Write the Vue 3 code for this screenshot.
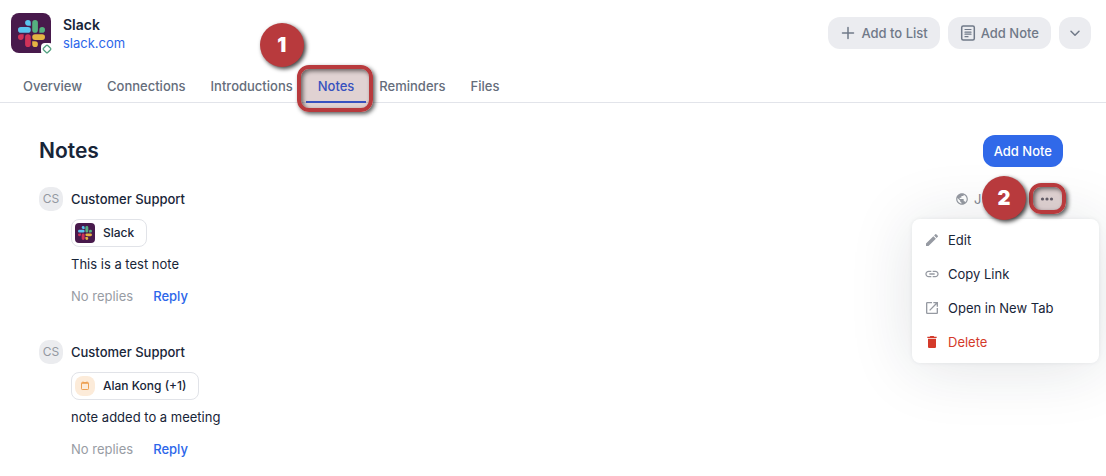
<script setup>
import { ref } from 'vue'

const tabs = ['Overview', 'Connections', 'Introductions', 'Notes', 'Reminders', 'Files']
const activeTab = ref('Notes')

const notes = [
  { id: 1, author: 'Customer Support', initials: 'CS', tag: 'Slack', kind: 'company', body: 'This is a test note', date: 'J', menuOpen: true },
  { id: 2, author: 'Customer Support', initials: 'CS', tag: 'Alan Kong (+1)', kind: 'meeting', body: 'note added to a meeting', date: '', menuOpen: false },
]

const menuItems = [
  { label: 'Edit', icon: 'M3 17.250V21h3.750L17.810 9.940l-3.750-3.750L3 17.250zM20.710 7.040a1 1 0 0 0 0-1.410l-2.340-2.340a1 1 0 0 0-1.410 0l-1.830 1.830 3.750 3.750 1.830-1.830z' },
  { label: 'Copy Link', icon: 'M3.900 12c0-1.710 1.390-3.100 3.100-3.100h4V7H7c-2.760 0-5 2.240-5 5s2.240 5 5 5h4v-1.900H7c-1.710 0-3.100-1.390-3.100-3.100zM8 13h8v-2H8v2zm9-6h-4v1.900h4c1.710 0 3.100 1.390 3.100 3.100s-1.390 3.100-3.100 3.100h-4V17h4c2.760 0 5-2.240 5-5s-2.240-5-5-5z' },
  { label: 'Open in New Tab', icon: 'M19 19H5V5h7V3H5a2 2 0 0 0-2 2v14a2 2 0 0 0 2 2h14c1.100 0 2-.9 2-2v-7h-2v7zM14 3v2h3.590l-9.830 9.830 1.410 1.410L19 6.410V10h2V3h-7z' },
  { label: 'Delete', danger: true, icon: 'M6 19c0 1.100.9 2 2 2h8c1.100 0 2-.9 2-2V7H6v12zM19 4h-3.500l-1-1h-5l-1 1H5v2h14V4z' },
]

const slackMark = [
  { fill: '#cf3259', d: 'M5.042 15.165a2.528 2.528 0 0 1-2.520 2.523A2.528 2.528 0 0 1 0 15.165a2.527 2.527 0 0 1 2.522-2.520h2.520v2.520zM6.313 15.165a2.527 2.527 0 0 1 2.521-2.520 2.527 2.527 0 0 1 2.521 2.520v6.313A2.528 2.528 0 0 1 8.834 24a2.528 2.528 0 0 1-2.521-2.522v-6.313z' },
  { fill: '#5bc3ee', d: 'M8.834 5.042a2.528 2.528 0 0 1-2.521-2.520A2.528 2.528 0 0 1 8.834 0a2.528 2.528 0 0 1 2.521 2.522v2.520H8.834zM8.834 6.313a2.528 2.528 0 0 1 2.521 2.521 2.528 2.528 0 0 1-2.521 2.521H2.522A2.528 2.528 0 0 1 0 8.834a2.528 2.528 0 0 1 2.522-2.521h6.312z' },
  { fill: '#55b17f', d: 'M18.956 8.834a2.528 2.528 0 0 1 2.522-2.521A2.528 2.528 0 0 1 24 8.834a2.528 2.528 0 0 1-2.522 2.521h-2.522V8.834zM17.688 8.834a2.528 2.528 0 0 1-2.523 2.521 2.527 2.527 0 0 1-2.520-2.521V2.522A2.527 2.527 0 0 1 15.165 0a2.528 2.528 0 0 1 2.523 2.522v6.312z' },
  { fill: '#e5b443', d: 'M15.165 18.956a2.528 2.528 0 0 1 2.523 2.522A2.528 2.528 0 0 1 15.165 24a2.527 2.527 0 0 1-2.520-2.522v-2.522h2.520zM15.165 17.688a2.527 2.527 0 0 1-2.520-2.523 2.526 2.526 0 0 1 2.520-2.520h6.313A2.527 2.527 0 0 1 24 15.165a2.528 2.528 0 0 1-2.522 2.523h-6.313z' },
]
</script>

<template>
  <div class="page">
    <header class="header">
      <div class="company">
        <div class="logo">
          <svg class="logo-mark" viewBox="0 0 24 24" aria-hidden="true">
            <path v-for="p in slackMark" :key="p.fill" :d="p.d" :fill="p.fill" />
          </svg>
          <span class="logo-status">
            <svg viewBox="0 0 12 12" width="12" height="12" aria-hidden="true">
              <rect x="3" y="3" width="6" height="6" rx="1" transform="rotate(45 6 6)" fill="none" stroke="#4f9f7d" stroke-width="1.200" />
            </svg>
          </span>
        </div>
        <div class="company-text">
          <h1>Slack</h1>
          <a href="#">slack.com</a>
        </div>
      </div>
      <div class="actions">
        <button class="soft" type="button">
          <svg viewBox="0 0 16 16" width="16" height="16" fill="none" stroke="currentColor" stroke-width="1.500" stroke-linecap="round" aria-hidden="true"><path d="M8 2.500v11M2.500 8h11" /></svg>
          Add to List
        </button>
        <button class="soft" type="button">
          <svg viewBox="0 0 16 16" width="16" height="16" fill="none" stroke="currentColor" stroke-width="1.500" stroke-linecap="round" aria-hidden="true"><rect x="1.700" y="1" width="12.600" height="14" rx="1.500" /><path d="M5 4.500h6M5 7.200h6M5 9.200h6M5 11.700h3" stroke-width="1.200" /></svg>
          Add Note
        </button>
        <button class="soft square" type="button" aria-label="More actions">
          <svg viewBox="0 0 16 16" width="16" height="16" fill="none" stroke="currentColor" stroke-width="1.500" stroke-linecap="round" stroke-linejoin="round" aria-hidden="true"><path d="M4 6.200l4 4 4-4" /></svg>
        </button>
      </div>
    </header>

    <nav class="tabs">
      <a v-for="tab in tabs" :key="tab" href="#" class="tab" :class="{ active: tab === activeTab }" @click.prevent="activeTab = tab">
        {{ tab }}
        <template v-if="tab === 'Notes'">
          <span class="frame frame-tab"></span>
          <span class="step step-one">1</span>
        </template>
      </a>
    </nav>

    <main class="content">
      <div class="title-row">
        <h2>Notes</h2>
        <button class="primary" type="button">Add Note</button>
      </div>

      <article v-for="note in notes" :key="note.id" class="note">
        <span class="avatar">{{ note.initials }}</span>
        <div class="note-main">
          <div class="note-head">
            <span class="author">{{ note.author }}</span>
            <div v-if="note.menuOpen" class="meta">
              <svg class="globe" viewBox="0 0 24 24" width="14" height="14" fill="currentColor" aria-hidden="true"><path d="M12 2C6.480 2 2 6.480 2 12s4.480 10 10 10 10-4.480 10-10S17.520 2 12 2zm-1 17.930c-3.950-.49-7-3.850-7-7.930 0-.62.080-1.210.210-1.790L9 15v1c0 1.100.9 2 2 2v1.930zm6.900-2.540c-.26-.81-1-1.390-1.900-1.390h-1v-3c0-.55-.45-1-1-1H8v-2h2c.55 0 1-.45 1-1V7h2c1.100 0 2-.9 2-2v-.41c2.930 1.190 5 4.060 5 7.410 0 2.080-.8 3.970-2.100 5.390z" /></svg>
              <span class="date">{{ note.date }}</span>
              <button class="more" type="button" aria-label="Note options" aria-expanded="true">
                <svg viewBox="0 0 16 16" width="16" height="16" fill="currentColor" aria-hidden="true"><circle cx="3.500" cy="8" r="1.600" /><circle cx="8" cy="8" r="1.600" /><circle cx="12.500" cy="8" r="1.600" /></svg>
              </button>
              <div class="menu" role="menu">
                <button v-for="item in menuItems" :key="item.label" type="button" role="menuitem" class="menu-item" :class="{ danger: item.danger }">
                  <svg viewBox="0 0 24 24" width="16" height="16" fill="currentColor" aria-hidden="true"><path :d="item.icon" /></svg>
                  {{ item.label }}
                </button>
              </div>
              <span class="frame frame-more"></span>
              <span class="step step-two">2</span>
            </div>
          </div>
          <a href="#" class="chip">
            <span class="chip-icon" :class="note.kind">
              <svg v-if="note.kind === 'company'" viewBox="0 0 24 24" width="14" height="14" aria-hidden="true">
                <path v-for="p in slackMark" :key="p.fill" :d="p.d" :fill="p.fill" />
              </svg>
              <svg v-else viewBox="0 0 12 12" width="12" height="12" fill="none" stroke="#eda052" aria-hidden="true"><rect x="2.500" y="2.500" width="7" height="7" rx="0.800" /><path d="M2.500 3.300h7" /><path d="M4 1.500v1M8 1.500v1" /></svg>
            </span>
            {{ note.tag }}
          </a>
          <p class="body">{{ note.body }}</p>
          <div class="replies">
            <span>No replies</span>
            <button type="button" class="reply">Reply</button>
          </div>
        </div>
      </article>
    </main>
  </div>
</template>

<style>
body {
  margin: 0;
  background: #fff;
  overflow-x: hidden;
}
</style>

<style scoped>
.page {
  font-family: Inter, "Liberation Sans", sans-serif;
  font-size: 13px;
  line-height: 20px;
  color: #182538;
}
h1, h2, p {
  margin: 0;
}
a {
  text-decoration: none;
  color: inherit;
}
button {
  font: inherit;
  color: inherit;
  border: 0;
  padding: 0;
  background: none;
  cursor: pointer;
}
svg {
  display: block;
  flex: none;
}
.header {
  display: flex;
  justify-content: space-between;
  align-items: flex-start;
  padding: 13px 15px 0 11px;
}
.company {
  display: flex;
  gap: 12px;
}
.logo {
  position: relative;
  display: flex;
  align-items: center;
  justify-content: center;
  width: 40px;
  height: 40px;
  border-radius: 8px;
  background: #481a4c;
}
.logo-mark {
  width: 27px;
  height: 27px;
}
.logo-status {
  position: absolute;
  right: -2px;
  bottom: -2px;
  display: flex;
  border-radius: 4px;
  background: #fff;
}
.company-text h1 {
  font-size: 14px;
  line-height: 20px;
  font-weight: 600;
  padding-top: 2px;
}
.company-text a {
  display: block;
  line-height: 17px;
  color: #2c66ea;
}
.actions {
  display: flex;
  gap: 8px;
  padding-top: 4px;
}
.soft {
  display: flex;
  align-items: center;
  justify-content: center;
  gap: 5px;
  height: 32px;
  padding: 0 12px;
  border-radius: 12px;
  background: #ebecf0;
  color: #707988;
  font-weight: 500;
}
.square {
  width: 32px;
  padding: 0;
}
.tabs {
  display: flex;
  gap: 1px;
  margin-top: 17px;
  padding-left: 11px;
  border-bottom: 1px solid #e2e4ea;
}
.tab {
  position: relative;
  padding: 6px 12px 5px;
  border-bottom: 2px solid transparent;
  margin-bottom: -1px;
  font-weight: 500;
  color: #656d7b;
}
.active {
  color: #2c5ee8;
  border-bottom-color: #2c5ee8;
}
.content {
  padding: 32px 43px 0 39px;
}
.title-row {
  display: flex;
  align-items: center;
  justify-content: space-between;
  margin-bottom: 20px;
}
h2 {
  font-size: 21px;
  line-height: 32px;
  font-weight: 600;
}
.primary {
  height: 32px;
  padding: 0 11px;
  border-radius: 12px;
  background: #3069e9;
  color: #fff;
  font-weight: 500;
}
.note {
  display: flex;
  gap: 8px;
  margin-bottom: 34px;
}
.avatar {
  flex: none;
  width: 24px;
  height: 24px;
  border-radius: 10px;
  background: #ebecef;
  color: #9398a1;
  font-size: 12px;
  line-height: 24px;
  text-align: center;
}
.note-main {
  flex: 1;
}
.note-head {
  display: flex;
  align-items: center;
  justify-content: space-between;
  height: 24px;
  margin-bottom: 8px;
}
.author {
  font-weight: 500;
}
.meta {
  position: relative;
  display: flex;
  align-items: center;
  color: #7d8592;
}
.globe {
  color: #969aa2;
}
.date {
  width: 57px;
  margin-left: 5px;
}
.more {
  display: flex;
  align-items: center;
  justify-content: center;
  width: 32px;
  height: 24px;
  color: #656d7b;
}
.menu {
  position: absolute;
  top: 32px;
  right: -36px;
  display: flex;
  flex-direction: column;
  box-sizing: border-box;
  width: 187px;
  padding: 4px 0;
  border-radius: 8px;
  background: #fff;
  box-shadow: 0 0 4px rgba(24, 37, 56, 0.08), 0 4px 64px rgba(24, 37, 56, 0.13);
}
.menu-item {
  display: flex;
  align-items: center;
  gap: 8px;
  height: 34px;
  padding: 0 12px;
  color: #182538;
}
.menu-item svg {
  color: #969aa2;
}
.menu-item.danger, .menu-item.danger svg {
  color: #d43a2a;
}
.chip {
  display: inline-flex;
  align-items: center;
  gap: 8px;
  box-sizing: border-box;
  height: 28px;
  padding: 0 12px 0 3px;
  border: 1px solid #e1e3e8;
  border-radius: 8px;
  font-size: 12px;
  font-weight: 500;
}
.chip-icon {
  display: flex;
  align-items: center;
  justify-content: center;
  width: 20px;
  height: 20px;
}
.chip-icon.company {
  border-radius: 4px;
  background: #481a4c;
}
.chip-icon.meeting {
  border-radius: 8px;
  background: #fcebd9;
}
.body {
  margin-top: 7px;
}
.replies {
  display: flex;
  gap: 20px;
  margin-top: 12px;
  color: #989ca4;
}
.reply {
  color: #2c66ea;
  font-weight: 500;
}
.frame {
  position: absolute;
  box-sizing: border-box;
  border: 4px solid #b83a3d;
  border-radius: 12px;
  background: rgba(100, 30, 30, 0.2);
  box-shadow: 2px 2px 4px rgba(0, 0, 0, 0.65), inset 2px 2px 4px rgba(0, 0, 0, 0.55);
  pointer-events: none;
}
.frame-tab {
  inset: -5px -7px -11px -9px;
}
.frame-more {
  top: -4px;
  right: -3px;
  width: 37px;
  height: 31px;
}
.step {
  position: absolute;
  width: 44px;
  height: 44px;
  border-radius: 50%;
  background: #b83a3d;
  box-shadow: 2px 2px 4px rgba(0, 0, 0, 0.75);
  color: #fff;
  font-size: 20px;
  line-height: 44px;
  font-weight: 900;
  text-align: center;
}
.step-one {
  top: -47px;
  left: -46px;
}
.step-two {
  top: -11px;
  right: 37px;
}
</style>
